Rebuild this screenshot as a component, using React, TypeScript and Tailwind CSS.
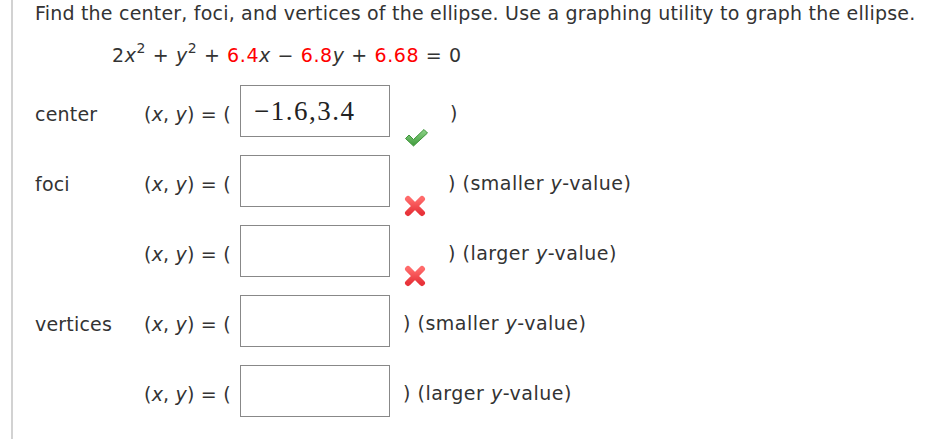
import React from 'react';

function CheckMark() {
  return (
    <svg width="25" height="19" viewBox="0 0 25 19">
      <defs>
        <linearGradient id="chk" x1="0" y1="0" x2="0" y2="1">
          <stop offset="0" stopColor="#8fd48a" />
          <stop offset="1" stopColor="#3e9a3a" />
        </linearGradient>
      </defs>
      <path
        d="M1.5 10.5 L5 7 L9.5 11.5 L20 1.5 L23.5 5 L9.5 18 Z"
        fill="url(#chk)"
        stroke="#3f953b"
        strokeWidth="1"
        strokeLinejoin="round"
      />
    </svg>
  );
}

function CrossMark() {
  return (
    <svg width="22" height="22" viewBox="0 0 22 22">
      <defs>
        <linearGradient id="crs" x1="0" y1="0" x2="0" y2="1">
          <stop offset="0" stopColor="#ff6b6b" />
          <stop offset="1" stopColor="#e8333a" />
        </linearGradient>
      </defs>
      <path
        d="M4 4 L18 18 M18 4 L4 18"
        stroke="url(#crs)"
        strokeWidth="6"
        strokeLinecap="round"
      />
    </svg>
  );
}

type Row = {
  label?: string;
  value?: string;
  status?: 'ok' | 'bad';
  note?: string;
};

const rows: Row[] = [
  { label: 'center', value: '−1.6,3.4', status: 'ok' },
  { label: 'foci', status: 'bad', note: 'smaller' },
  { status: 'bad', note: 'larger' },
  { label: 'vertices', note: 'smaller' },
  { note: 'larger' },
];

function XY() {
  return (
    <span>
      (<i>x</i>, <i>y</i>) = (
    </span>
  );
}

export default function App() {
  return (
    <div className="h-[439px] w-[942px] bg-white overflow-hidden">
      <div className="ml-[11px] h-full border-l-2 border-[#d2d2d2] pl-[22px] pt-[1px] font-['DejaVu_Sans',sans-serif] text-[19px] leading-[25px] tracking-[0.2px] text-[#333]">
        <p>Find the center, foci, and vertices of the ellipse. Use a graphing utility to graph the ellipse.</p>
        <p className="mt-[17px] pl-[77px] tracking-[0.6px]">
          2<i>x</i>
          <sup className="-top-[9px] text-[14px] leading-none">2</sup> + <i>y</i>
          <sup className="-top-[9px] text-[14px] leading-none">2</sup> + <span className="text-[#f00]">6.4</span>
          <i>x</i> − <span className="text-[#f00]">6.8</span>
          <i>y</i> + <span className="text-[#f00]">6.68</span> = 0
        </p>
        <div className="mt-[17px] flex flex-col gap-[18px]">
          {rows.map((r, i) => (
            <div key={i} className="flex h-[52px] items-start">
              <div className="w-[109px] pt-[17px]">{r.label}</div>
              <div className="w-[96px] pt-[17px]">
                <XY />
              </div>
              <div className="h-[52px] w-[150px] border border-[#888] pl-[13px] pt-[10px] font-['Liberation_Serif',serif] text-[27px] leading-[30px] tracking-[1.5px] text-[#222]">
                {r.value}
              </div>
              {r.status ? (
                <div className="ml-[14px] flex h-[62px] w-[40px] items-end">
                  {r.status === 'ok' ? <CheckMark /> : <CrossMark />}
                </div>
              ) : (
                <div className="w-[13px]" />
              )}
              <div
                className={
                  r.status === 'ok'
                    ? 'pl-[6px] pt-[16px]'
                    : r.status
                      ? 'pl-[4px] pt-[16px] tracking-[0.5px]'
                      : 'pt-[16px] tracking-[0.5px]'
                }
              >
                ){r.note && (
                  <span>
                    {' '}(<span>{r.note}</span> <i>y</i>-value)
                  </span>
                )}
              </div>
            </div>
          ))}
        </div>
      </div>
    </div>
  );
}
